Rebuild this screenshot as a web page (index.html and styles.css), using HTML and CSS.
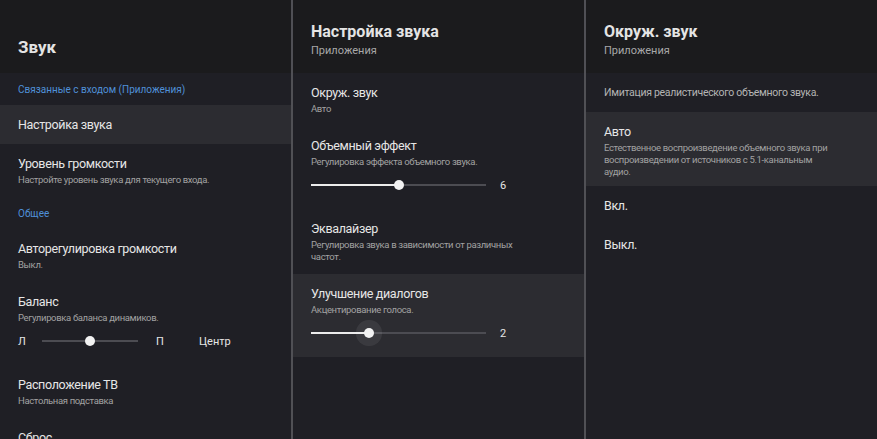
FILE: index.html
```html
<!DOCTYPE html>
<html lang="ru">
<head>
<meta charset="utf-8">
<title>Звук</title>
<link rel="stylesheet" href="styles.css">
</head>
<body>
<div class="screen">
  <section class="panel">
    <header class="head">
      <h1 class="head-title head-title--solo">Звук</h1>
    </header>
    <div class="list">
      <div class="cat">Связанные с входом (Приложения)</div>
      <div class="row row--single row--active">Настройка звука</div>
      <div class="row">
        <div class="row-title">Уровень громкости</div>
        <div class="row-sub">Настройте уровень звука для текущего входа.</div>
      </div>
      <div class="cat">Общее</div>
      <div class="row">
        <div class="row-title">Авторегулировка громкости</div>
        <div class="row-sub">Выкл.</div>
      </div>
      <div class="row row--slider">
        <div class="row-title">Баланс</div>
        <div class="row-sub">Регулировка баланса динамиков.</div>
        <div class="balance">
          <span class="bal-l">Л</span>
          <div class="track track--short">
            <span class="thumb" style="left:50%"></span>
          </div>
          <span class="bal-r">П</span>
          <span class="bal-v">Центр</span>
        </div>
      </div>
      <div class="row">
        <div class="row-title">Расположение ТВ</div>
        <div class="row-sub">Настольная подставка</div>
      </div>
      <div class="row">
        <div class="row-title">Сброс</div>
      </div>
    </div>
  </section>

  <section class="panel">
    <header class="head">
      <h1 class="head-title">Настройка звука</h1>
      <div class="head-sub">Приложения</div>
    </header>
    <div class="list">
      <div class="row">
        <div class="row-title">Окруж. звук</div>
        <div class="row-sub">Авто</div>
      </div>
      <div class="row row--slider">
        <div class="row-title">Объемный эффект</div>
        <div class="row-sub">Регулировка эффекта объемного звука.</div>
        <div class="slider">
          <div class="track">
            <span class="fill" style="width:50%"></span>
            <span class="thumb" style="left:50%"></span>
          </div>
          <span class="slider-val">6</span>
        </div>
      </div>
      <div class="row">
        <div class="row-title">Эквалайзер</div>
        <div class="row-sub row-sub--wrap">Регулировка звука в зависимости от различных частот.</div>
      </div>
      <div class="row row--slider row--active">
        <div class="row-title">Улучшение диалогов</div>
        <div class="row-sub">Акцентирование голоса.</div>
        <div class="slider">
          <div class="track">
            <span class="fill" style="width:33%"></span>
            <span class="thumb thumb--focus" style="left:33%"></span>
          </div>
          <span class="slider-val">2</span>
        </div>
      </div>
    </div>
  </section>

  <section class="panel panel--last">
    <header class="head">
      <h1 class="head-title">Окруж. звук</h1>
      <div class="head-sub">Приложения</div>
    </header>
    <div class="list">
      <div class="row row--single row--desc">Имитация реалистического объемного звука.</div>
      <div class="row row--opt row--active">
        <div class="row-title">Авто</div>
        <div class="row-sub row-sub--wide">Естественное воспроизведение объемного звука при воспроизведении от источников с 5.1-канальным аудио.</div>
      </div>
      <div class="row row--single">Вкл.</div>
      <div class="row row--single">Выкл.</div>
    </div>
  </section>
</div>
</body>
</html>
```

FILE: styles.css
```css
* { box-sizing: border-box; }

html, body {
  margin: 0;
  padding: 0;
  width: 877px;
  height: 439px;
  overflow: hidden;
  background: #1e1e23;
  font-family: Roboto, "Noto Sans", "DejaVu Sans", sans-serif;
  color: #e6e6e6;
}

.screen {
  display: grid;
  grid-template-columns: 293px 293px 1fr;
  height: 439px;
}

.panel {
  display: flex;
  flex-direction: column;
  border-right: 2px solid #505055;
  min-width: 0;
  overflow: hidden;
}

.panel--last { border-right: 0; }

.head {
  height: 73px;
  flex: none;
  background: #1b1b1d;
  padding: 22px 18px 0;
}

.head-title {
  margin: 0;
  font-size: 16px;
  line-height: 20px;
  font-weight: 700;
  color: #e4e4e4;
}

.head-title--solo {
  margin-top: 15px;
  font-size: 17px;
}

.head-sub {
  margin-top: 2px;
  font-size: 11px;
  line-height: 14px;
  color: #a8a8a8;
}

.list {
  flex: 1;
  background: #1f1f25;
}

.cat {
  height: 32px;
  padding: 10px 18px 0;
  font-size: 10px;
  line-height: 14px;
  color: #4f90d8;
}

.row {
  padding: 12px 18px 11px;
}

.row--active { background: #2c2c31; }

.row--single {
  height: 39px;
  padding: 0 18px;
  display: flex;
  align-items: center;
  font-size: 12.5px;
  letter-spacing: -0.35px;
  color: #e6e6e6;
}

.row--desc {
  font-size: 10.5px;
  letter-spacing: -0.3px;
  color: #b4b4b4;
}

.row--slider { padding-bottom: 9px; }

.row--opt { padding-bottom: 8px; }

.row-title {
  font-size: 12.5px;
  line-height: 16px;
  letter-spacing: -0.35px;
  color: #e6e6e6;
}

.row-sub {
  margin-top: 2px;
  font-size: 9.5px;
  line-height: 12px;
  letter-spacing: -0.35px;
  color: #a2a2a2;
}

.row-sub--wrap { max-width: 205px; }

.row-sub--wide { max-width: 226px; }

.slider,
.balance {
  height: 30px;
  margin-top: 2px;
  display: flex;
  align-items: center;
}

.track {
  position: relative;
  width: 175px;
  height: 2px;
  background: #4c4c52;
  flex: none;
}

.track--short { width: 96px; }

.fill {
  position: absolute;
  left: 0;
  top: 0;
  height: 2px;
  background: #ececec;
}

.thumb {
  position: absolute;
  top: 50%;
  width: 10px;
  height: 10px;
  margin: -5px 0 0 -5px;
  border-radius: 50%;
  background: #f2f2f2;
}

.thumb--focus {
  box-shadow: 0 0 0 8px rgba(255, 255, 255, 0.07);
}

.slider-val {
  margin-left: 14px;
  font-size: 11px;
  color: #e6e6e6;
}

.balance {
  font-size: 11px;
  color: #e6e6e6;
}

.bal-l { width: 24px; }

.bal-r { margin-left: 18px; width: 43px; }
```
